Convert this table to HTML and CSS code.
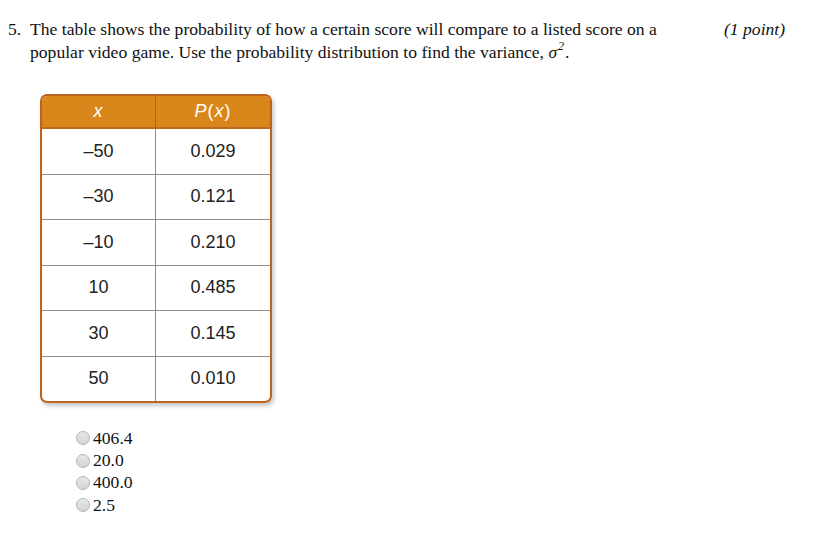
FILE: index.html
```html
<!DOCTYPE html>
<html>
<head>
<meta charset="utf-8">
<link rel="stylesheet" href="styles.css">
</head>
<body>
<div class="question">
  <div class="num">5.</div>
  <div class="content">
    <p class="stem">The table shows the probability of how a certain score will compare to a listed score on a popular video game. Use the probability distribution to find the variance, <i>σ</i><sup><i>2</i></sup><span class="dot">.</span></p>
    <div class="table-wrap">
      <table class="prob">
        <thead>
          <tr><th><i>x</i></th><th><i>P</i>(<i>x</i>)</th></tr>
        </thead>
        <tbody>
          <tr><td>–50</td><td>0.029</td></tr>
          <tr><td>–30</td><td>0.121</td></tr>
          <tr><td>–10</td><td>0.210</td></tr>
          <tr><td>10</td><td>0.485</td></tr>
          <tr><td>30</td><td>0.145</td></tr>
          <tr><td>50</td><td>0.010</td></tr>
        </tbody>
      </table>
    </div>
    <ul class="options">
      <li><span class="radio"></span>406.4</li>
      <li><span class="radio"></span>20.0</li>
      <li><span class="radio"></span>400.0</li>
      <li><span class="radio"></span>2.5</li>
    </ul>
  </div>
  <div class="points"><i>(1 point)</i></div>
</div>
</body>
</html>
```

FILE: styles.css
```css
html, body {
  margin: 0;
  padding: 0;
  background: #fff;
}
body {
  font-family: "Liberation Serif", "Times New Roman", serif;
  font-size: 17.6px;
  color: #111;
  padding: 18px 8px 0 8px;
}
.question {
  display: flex;
  align-items: flex-start;
}
.num {
  width: 22px;
  flex: none;
  line-height: 23px;
}
.content {
  width: 662px;
  flex: none;
}
.stem {
  margin: 0;
  line-height: 23px;
}
.stem sup {
  font-size: 12px;
  line-height: 0;
  vertical-align: 8px;
  margin-left: 1px;
}
.stem .dot {
  margin-left: 1px;
}
.points {
  margin-left: 32px;
  line-height: 23px;
}
.table-wrap {
  box-sizing: border-box;
  margin: 30px 0 0 10px;
  width: 232px;
  border: 2px solid #bd6320;
  border-radius: 7px;
  overflow: hidden;
  box-shadow: 2px 3px 4px rgba(0,0,0,0.22);
}
.prob {
  border-collapse: collapse;
  width: 100%;
  font-family: "Liberation Sans", Arial, sans-serif;
  font-size: 18px;
  color: #222;
}
.prob th {
  background: #d9861a;
  color: #fff;
  font-weight: normal;
  letter-spacing: 1px;
  height: 31px;
  padding: 0;
  border-bottom: 2px solid #c06a1f;
  border-left: 1px solid #8a6a50;
}
.prob th:first-child, .prob td:first-child {
  border-left: none;
  width: 113px;
}
.prob td {
  text-align: center;
  height: 44.5px;
  padding: 0;
  border-top: 1px solid #8c8c8c;
  border-left: 1px solid #8c8c8c;
}
.prob tbody tr:first-child td {
  border-top: none;
}
.options {
  list-style: none;
  margin: 24px 0 0 46px;
  padding: 0;
}
.options li {
  display: flex;
  align-items: center;
  height: 22.4px;
}
.radio {
  width: 12px;
  height: 12px;
  border-radius: 50%;
  border: 1px solid #b4b4b4;
  background: linear-gradient(#e8e8e8, #d4d4d4);
  margin-right: 3px;
  flex: none;
}
```
